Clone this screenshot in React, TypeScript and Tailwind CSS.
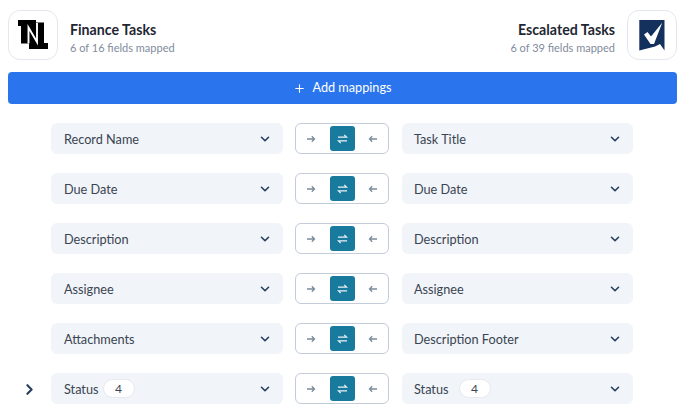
import { ChevronDown, ChevronRight, Plus } from "lucide-react";

const rows: [string, string, string?][] = [
  ["Record Name", "Task Title"],
  ["Due Date", "Due Date"],
  ["Description", "Description"],
  ["Assignee", "Assignee"],
  ["Attachments", "Description Footer"],
  ["Status", "Status", "4"],
];

function Field({ label, count, box, gap }: { label: string; count?: string; box: string; gap: string }) {
  return (
    <div className={`flex h-[31px] shrink-0 items-center rounded-[6px] bg-[#f1f4f8] pr-[11px] ${box}`}>
      <span className="pt-[1px] text-[12.7px] leading-none text-[#3a4452]">{label}</span>
      {count && (
        <span className={`flex h-[19px] w-[32px] items-center justify-center rounded-full border border-[#e6eaf0] bg-white text-[12px] text-[#3a4452] ${gap}`}>
          {count}
        </span>
      )}
      <ChevronDown className="ml-auto h-[14px] w-[14px] text-[#27405f]" strokeWidth={2.8} />
    </div>
  );
}

function Arrow({ dir }: { dir: "r" | "l" }) {
  return (
    <svg width="10" height="10" viewBox="0 0 10 10" fill="none" stroke="#7b8a9b" strokeWidth="1.3">
      {dir === "r" ? <path d="M1 5h7.500M5.800 2.300 8.500 5 5.800 7.700" /> : <path d="M9 5H1.500M4.200 2.300 1.500 5l2.700 2.700" />}
    </svg>
  );
}

function Toggle() {
  return (
    <div className="flex h-[31px] w-[94px] shrink-0 items-center justify-between rounded-[6px] border border-[#c3ccd9] bg-white">
      <div className="flex w-[30px] justify-center"><Arrow dir="r" /></div>
      <div className="flex h-[25px] w-[25px] items-center justify-center rounded-[3px] bg-[#187a9c]">
        <svg width="11" height="10" viewBox="0 0 12 11" fill="none" stroke="#e6f2f6" strokeWidth="1.4">
          <path d="M1 3.500h9.500L8 1M11 7.500H1.500L4 10" />
        </svg>
      </div>
      <div className="flex w-[30px] justify-center"><Arrow dir="l" /></div>
    </div>
  );
}

export default function App() {
  return (
    <div className="h-[417px] w-[683px] overflow-hidden bg-white px-[8px] pt-[10px] font-['Lato','sans-serif']">
      <header className="flex h-[50px] w-[669px] items-center justify-between">
        <div className="flex items-center gap-[12px]">
          <div className="h-[50px] w-[50px] rounded-[12px] border border-[#e3e8f0] bg-white">
            <svg width="48" height="48" viewBox="1 1 48 48">
              <path d="M10 10H28V12.500H36V33H40V39H21V33.500H13V16H10Z" fill="#000" />
              <path d="M20.500 33.500V17.500L29 32V13" fill="none" stroke="#fff" strokeWidth="1.900" />
            </svg>
          </div>
          <div className="pt-[5px]">
            <div className="text-[14.2px] font-bold leading-[20px] text-[#1f2733]">Finance Tasks</div>
            <div className="text-[11px] leading-[16px] text-[#7f8c9d]">6 of 16 fields mapped</div>
          </div>
        </div>
        <div className="flex items-center gap-[12px]">
          <div className="pt-[5px] text-right">
            <div className="text-[14.2px] font-bold leading-[20px] text-[#1f2733]">Escalated Tasks</div>
            <div className="text-[11px] leading-[16px] text-[#7f8c9d]">6 of 39 fields mapped</div>
          </div>
          <div className="h-[50px] w-[50px] rounded-[12px] border border-[#e3e8f0] bg-white">
            <svg width="48" height="48" viewBox="1 1 48 48">
              <path d="M12.300 10H37.500V40.500L33 34L28 36.500L12.300 40.500Z" fill="#13315c" />
              <path d="M17 24.500L20.500 22L24 26.500L35.200 12.700L27 34H23.500Z" fill="#fff" />
            </svg>
          </div>
        </div>
      </header>
      <button className="mt-[12px] flex h-[32px] w-[669px] items-center justify-center gap-[6px] rounded-[4px] bg-[#2a75ed] text-[12.7px] text-white">
        <Plus className="h-[13px] w-[13px]" strokeWidth={2} />
        <span>Add mappings</span>
      </button>
      <div className="mt-[19px] flex flex-col gap-[19px]">
        {rows.map(([a, b, count]) => (
          <div key={a + b} className="relative flex items-center pl-[43px]">
            {count && <ChevronRight className="absolute left-[13px] top-[7.5px] h-[17px] w-[17px] text-[#27405f]" strokeWidth={3} />}
            <Field label={a} count={count} box="w-[232px] pl-[13px]" gap="ml-[4px]" />
            <div className="ml-[12px]"><Toggle /></div>
            <div className="ml-[13px]"><Field label={b} count={count} box="w-[231px] pl-[12px]" gap="ml-[10px]" /></div>
          </div>
        ))}
      </div>
    </div>
  );
}
